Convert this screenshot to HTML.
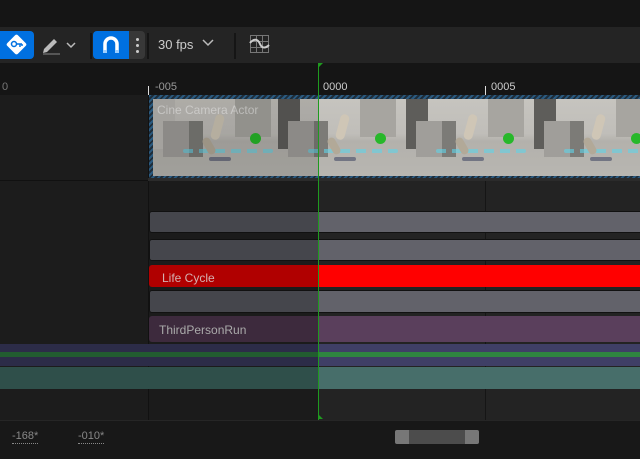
<!DOCTYPE html>
<html><head><style>
*{margin:0;padding:0;box-sizing:border-box}
body{width:640px;height:459px;background:#151515;position:relative;overflow:hidden;font-family:"Liberation Sans",sans-serif}
.a{position:absolute}
.bar{position:absolute;left:149px;width:495px;border-radius:3px 0 0 3px;overflow:hidden}
.bar .r{position:absolute;left:169px;right:0;top:0;bottom:0}
.frame{position:absolute;top:0;height:100%;width:128px;overflow:hidden;background:linear-gradient(#c6c4bf 0,#c0beb9 45%,#b3b1ac 55%,#b8b6b1 100%)}
.frame .dk{position:absolute;left:0;top:0;width:22px;height:50px;background:#5e5d5a}
.frame .bx{position:absolute;left:10px;top:22px;width:38px;height:36px;background:#a09e9a}
.frame .bx2{position:absolute;left:36px;top:22px;width:14px;height:36px;background:#7c7b77}
.frame .wl{position:absolute;left:82px;top:0;width:36px;height:38px;background:#a7a5a0}
.frame .fg{position:absolute;left:60px;top:15px;width:9px;height:26px;background:#cfc6b6;border-radius:5px;transform:rotate(15deg)}
.frame .fl{position:absolute;left:52px;top:38px;width:8px;height:18px;background:#b2a998;border-radius:4px;transform:rotate(-30deg)}
.frame .sh{position:absolute;left:56px;top:58px;width:22px;height:4px;background:#555a70;border-radius:2px;opacity:.7}
.frame .ln{position:absolute;left:30px;top:50px;width:90px;height:4px;background:repeating-linear-gradient(90deg,#5fd3e8 0 10px,transparent 10px 16px);opacity:.6;border-radius:2px}
.frame .gc{position:absolute;left:97px;top:34px;width:11px;height:11px;border-radius:50%;background:#27b82a}
</style></head><body>
<!-- toolbar -->
<div class="a" style="left:0;top:27px;width:640px;height:36px;background:#242424"></div>
<div class="a" style="left:0;top:31px;width:34px;height:28px;background:#0070e0;border-radius:0 4px 4px 0"></div>
<div class="a" style="left:9px;top:37px;width:15px;height:15px;background:#fff;transform:rotate(45deg);border-radius:2px"></div>
<svg class="a" style="left:9px;top:40px" width="16" height="10"><circle cx="5" cy="4" r="2.5" fill="none" stroke="#0070e0" stroke-width="1.5"/><path d="M7 4H13M11 4V7M13 4V6" stroke="#0070e0" stroke-width="1.5"/></svg>
<svg class="a" style="left:40px;top:34px" width="40" height="22"><path d="M4 15 L14 5 L17 8 L7 18 L3 19 Z" fill="#bbb"/><path d="M3 20 H20" stroke="#888" stroke-width="1"/><path d="M27 9 L31 13 L35 9" stroke="#bbb" stroke-width="1.5" fill="none"/></svg>
<div class="a" style="left:90px;top:33px;width:2px;height:26px;background:#151515"></div>
<div class="a" style="left:93px;top:31px;width:36px;height:28px;background:#0070e0;border-radius:4px 0 0 4px"></div>
<svg class="a" style="left:101px;top:34px" width="20" height="22"><path d="M4 18 V10 A6 6 0 0 1 16 10 V18" stroke="#fff" stroke-width="3.5" fill="none"/><rect x="2" y="16" width="4" height="3" fill="#9fd0ff"/><rect x="14" y="16" width="4" height="3" fill="#9fd0ff"/></svg>
<div class="a" style="left:129px;top:31px;width:16px;height:28px;background:#383838;border-radius:0 4px 4px 0"></div>
<div class="a" style="left:136px;top:38px;width:3px;height:3px;background:#ccc;border-radius:50%;box-shadow:0 6px 0 #ccc,0 12px 0 #ccc"></div>
<div class="a" style="left:147px;top:33px;width:2px;height:26px;background:#151515"></div>
<div class="a" style="left:158px;top:37px;color:#ccc;font-size:13px">30 fps</div>
<svg class="a" style="left:200px;top:36px" width="16" height="14"><path d="M3 4 L8 9 L13 4" stroke="#bbb" stroke-width="1.5" fill="none"/></svg>
<div class="a" style="left:234px;top:33px;width:2px;height:26px;background:#151515"></div>
<svg class="a" style="left:249px;top:34px" width="22" height="20"><g stroke="#777" stroke-width="1" fill="none"><rect x="1.5" y="1.5" width="18" height="17"/><path d="M7.5 1.5V18.5M13.5 1.5V18.5M1.5 7.5H19.5M1.5 13.5H19.5"/></g><path d="M1 9 C5 4 9 5 11 10 C13 15 17 14 20 11" stroke="#ccc" stroke-width="2" fill="none"/></svg>
<!-- ruler -->
<div class="a" style="left:2px;top:81px;color:#777;font-size:11px">0</div>
<div class="a" style="left:148px;top:86px;width:1px;height:9px;background:#ddd"></div>
<div class="a" style="left:155px;top:81px;color:#999;font-size:11px">-005</div>
<div class="a" style="left:318px;top:86px;width:1px;height:9px;background:#ddd"></div>
<div class="a" style="left:323px;top:81px;color:#ccc;font-size:11px">0000</div>
<div class="a" style="left:485px;top:86px;width:1px;height:9px;background:#ddd"></div>
<div class="a" style="left:491px;top:81px;color:#ccc;font-size:11px">0005</div>
<!-- left panel & track bg -->
<div class="a" style="left:0;top:95px;width:148px;height:325px;background:#1c1c1c"></div>
<div class="a" style="left:0;top:180px;width:148px;height:1px;background:#111"></div>
<div class="a" style="left:148px;top:95px;width:170px;height:325px;background:#1b1b1b;border-left:1px solid #111"></div>
<div class="a" style="left:318px;top:95px;width:322px;height:325px;background:#232323"></div>
<div class="a" style="left:485px;top:180px;width:1px;height:240px;background:#151515"></div>
<!-- camera track -->
<div class="a" style="left:149px;top:95px;width:491px;height:85px;background:repeating-linear-gradient(135deg,#2a5a80 0 2px,#1e2d3a 2px 4px)"></div>
<div class="a" style="left:153px;top:99px;width:487px;height:77px;overflow:hidden">
 <div class="frame" style="left:0"><div class="dk" style="background:#bbb9b4"></div><div class="bx"></div><div class="bx2"></div><div class="wl"></div><div class="ln"></div><div class="fg"></div><div class="fl"></div><div class="sh"></div><div class="gc"></div></div>
 <div class="frame" style="left:125px"><div class="dk"></div><div class="bx"></div><div class="bx2"></div><div class="wl"></div><div class="ln"></div><div class="fg"></div><div class="fl"></div><div class="sh"></div><div class="gc"></div></div>
 <div class="frame" style="left:253px"><div class="dk"></div><div class="bx"></div><div class="bx2"></div><div class="wl"></div><div class="ln"></div><div class="fg"></div><div class="fl"></div><div class="sh"></div><div class="gc"></div></div>
 <div class="frame" style="left:381px"><div class="dk"></div><div class="bx"></div><div class="bx2"></div><div class="wl"></div><div class="ln"></div><div class="fg"></div><div class="fl"></div><div class="sh"></div><div class="gc"></div></div>
 <div class="a" style="left:0;top:0;width:165px;height:77px;background:rgba(0,0,0,.12)"></div>
</div>
<div class="a" style="left:157px;top:103px;color:rgba(240,240,240,.45);font-size:12px">Cine Camera Actor</div>
<div class="a" style="left:148px;top:178px;width:492px;height:3px;background:#2b2b2b"></div>
<!-- bars -->
<div class="bar" style="top:211px;height:22px;background:#45464c;border:1px solid #111"><div class="r" style="background:#62626a"></div></div>
<div class="bar" style="top:239px;height:22px;background:#45464c;border:1px solid #111"><div class="r" style="background:#62626a"></div></div>
<div class="bar" style="top:265px;height:22px;background:#b00000"><div class="r" style="background:#ff0000"></div></div>
<div class="a" style="left:162px;top:271px;color:#ddd;font-size:12px;opacity:.8">Life Cycle</div>
<div class="bar" style="top:290px;height:23px;background:#45464c;border:1px solid #111"><div class="r" style="background:#62626a"></div></div>
<div class="bar" style="top:316px;height:26px;background:#3d2a3d"><div class="r" style="background:#5a3f5c"></div></div>
<div class="a" style="left:159px;top:323px;color:#aaa;font-size:12px">ThirdPersonRun</div>
<!-- bands -->
<div class="a" style="left:0;top:344px;width:318px;height:22px;background:#2c2c48"></div>
<div class="a" style="left:318px;top:344px;width:322px;height:22px;background:#3f3f66"></div>
<div class="a" style="left:0;top:352px;width:318px;height:5px;background:#225c30"></div>
<div class="a" style="left:318px;top:352px;width:322px;height:5px;background:#2f8540"></div>
<div class="a" style="left:0;top:367px;width:318px;height:22px;background:#2f4f4a"></div>
<div class="a" style="left:318px;top:367px;width:322px;height:22px;background:#476e6a"></div>
<!-- playhead -->
<div class="a" style="left:318px;top:63px;width:1px;height:357px;background:#1f9a1f"></div>
<div class="a" style="left:318px;top:63px;width:0;height:0;border-top:5px solid #1f9a1f;border-right:5px solid transparent"></div>
<div class="a" style="left:318px;top:414px;width:0;height:0;border-bottom:5px solid #1f9a1f;border-right:5px solid transparent"></div>
<!-- bottom -->
<div class="a" style="left:0;top:420px;width:640px;height:39px;background:#181818;border-top:1px solid #262626"></div>
<div class="a" style="left:12px;top:430px;color:#888;font-size:11px;border-bottom:1px dotted #888;padding-bottom:1px">-168*</div>
<div class="a" style="left:78px;top:430px;color:#888;font-size:11px;border-bottom:1px dotted #888;padding-bottom:1px">-010*</div>
<div class="a" style="left:395px;top:430px;width:84px;height:14px;background:#777;border-radius:2px"></div>
<div class="a" style="left:409px;top:430px;width:56px;height:14px;background:#4c4c4c"></div>
</body></html>
